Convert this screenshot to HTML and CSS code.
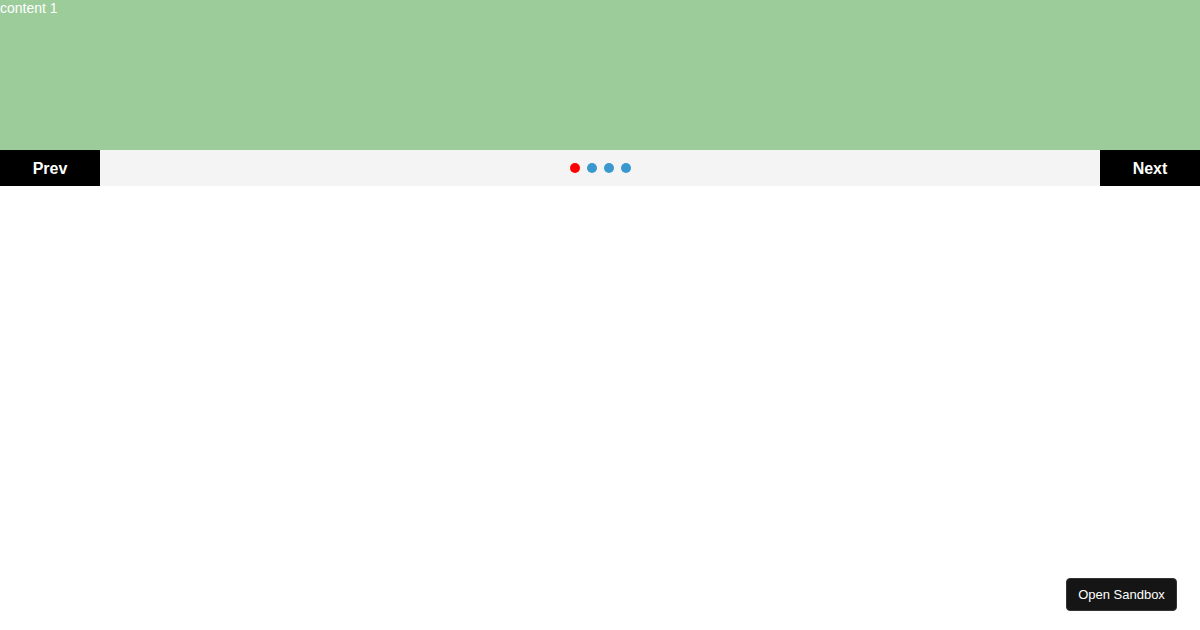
FILE: index.html
```html
<!DOCTYPE html>
<html>
<head>
<meta charset="utf-8">
<link rel="stylesheet" href="styles.css">
</head>
<body>
<div class="slider">
  <div class="slide">content 1</div>
  <div class="nav">
    <button class="btn">Prev</button>
    <div class="dots">
      <span class="dot active"></span>
      <span class="dot"></span>
      <span class="dot"></span>
      <span class="dot"></span>
    </div>
    <button class="btn">Next</button>
  </div>
</div>
<a class="sandbox">Open Sandbox</a>
</body>
</html>
```

FILE: styles.css
```css
html, body {
  margin: 0;
  padding: 0;
  width: 1200px;
  height: 630px;
  background: #fff;
  font-family: "Liberation Sans", Arial, sans-serif;
  overflow: hidden;
}
.slide {
  height: 150px;
  background: #9ccc9a;
  color: #fff;
  font-size: 14px;
  line-height: 16px;
}
.nav {
  display: flex;
  height: 36px;
  background: #f4f4f4;
}
.btn {
  width: 100px;
  height: 36px;
  border: 0;
  margin: 0;
  padding: 2px 0 0;
  background: #000;
  color: #fff;
  font-family: "Liberation Sans", Arial, sans-serif;
  font-weight: bold;
  font-size: 16px;
}
.dots {
  flex: 1;
  display: flex;
  justify-content: center;
  align-items: center;
  gap: 7px;
  padding-left: 1px;
}
.dot {
  width: 10px;
  height: 10px;
  border-radius: 50%;
  background: #3a98d0;
}
.dot.active {
  background: #ff0000;
}
.sandbox {
  position: fixed;
  right: 23px;
  bottom: 19px;
  width: 111px;
  height: 33px;
  box-sizing: border-box;
  display: flex;
  align-items: center;
  justify-content: center;
  background: #151515;
  border: 1px solid #333;
  border-radius: 4px;
  color: #fff;
  font-size: 13px;
}
```
